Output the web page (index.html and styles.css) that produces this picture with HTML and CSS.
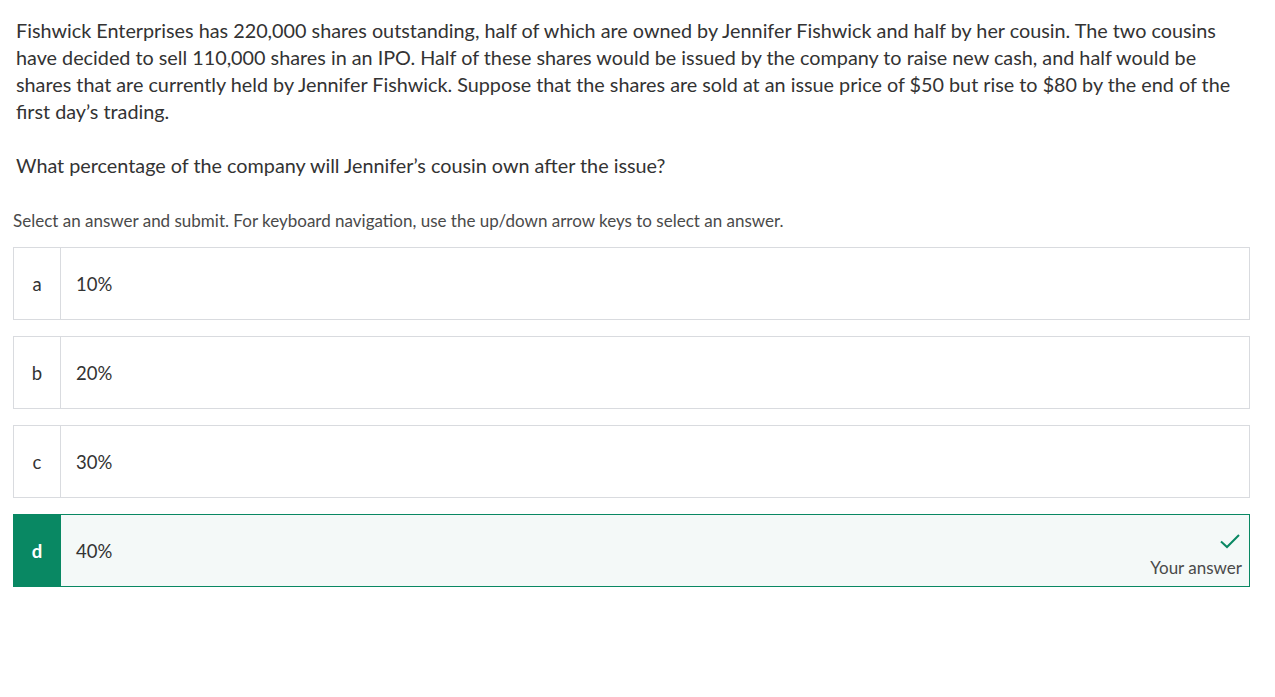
FILE: index.html
```html
<!DOCTYPE html>
<html lang="en">
<head>
<meta charset="utf-8">
<title>Question</title>
<link rel="stylesheet" href="styles.css">
</head>
<body>
<main class="page">
  <div class="question">
    <p>Fishwick Enterprises has 220,000 shares outstanding, half of which are owned by Jennifer Fishwick and half by her cousin. The two cousins have decided to sell 110,000 shares in an IPO. Half of these shares would be issued by the company to raise new cash, and half would be shares that are currently held by Jennifer Fishwick. Suppose that the shares are sold at an issue price of $50 but rise to $80 by the end of the first day’s trading.</p>
    <p>What percentage of the company will Jennifer’s cousin own after the issue?</p>
  </div>
  <p class="instructions">Select an answer and submit. For keyboard navigation, use the up/down arrow keys to select an answer.</p>
  <ul class="answers">
    <li class="answer"><span class="letter">a</span><span class="text">10%</span></li>
    <li class="answer"><span class="letter">b</span><span class="text">20%</span></li>
    <li class="answer"><span class="letter">c</span><span class="text">30%</span></li>
    <li class="answer selected"><span class="letter">d</span><span class="text">40%</span>
      <span class="status">
        <svg class="check" width="22" height="16" viewBox="0 0 22 16" aria-hidden="true"><path d="M2 8.5 L8 14 L20 2" fill="none" stroke="#098863" stroke-width="2"/></svg>
        <span class="your">Your answer</span>
      </span>
    </li>
  </ul>
</main>
</body>
</html>
```
FILE: styles.css
```css
html, body {
  margin: 0;
  padding: 0;
  background: #ffffff;
}
body {
  font-family: "Lato", "Liberation Sans", sans-serif;
  color: #333333;
}
.page {
  padding: 17px 25px 0 13px;
}
.question {
  padding-left: 3px;
  font-size: 19.8px;
  line-height: 27px;
  color: #333;
}
.question p {
  margin: 0 0 27px 0;
}
.instructions {
  margin: 0 0 14px 0;
  font-size: 17px;
  line-height: 24px;
  color: #4a4a4a;
  padding-top: 3px;
}
.answers {
  list-style: none;
  margin: 0;
  padding: 0;
  display: flex;
  flex-direction: column;
  gap: 16px;
}
.answer {
  display: flex;
  height: 71px;
  border: 1px solid #d9dbdf;
  align-items: stretch;
}
.letter {
  width: 46px;
  border-right: 1px solid #d9dbdf;
  display: flex;
  align-items: center;
  justify-content: center;
  font-size: 18.5px;
  color: #333;
}
.text {
  flex: 1;
  display: flex;
  align-items: center;
  padding-left: 15px;
  font-size: 18.5px;
  color: #333;
}
.selected {
  border-color: #098863;
  background: #f4f9f8;
}
.selected .letter {
  background: #098863;
  color: #ffffff;
  font-weight: 700;
  border-right-color: #098863;
}
.status {
  display: flex;
  flex-direction: column;
  align-items: flex-end;
  justify-content: center;
  padding: 10px 7px 0 0;
  gap: 8px;
}
.check {
  margin-right: 1px;
}
.your {
  font-size: 17px;
  color: #4a4a4a;
}
```
